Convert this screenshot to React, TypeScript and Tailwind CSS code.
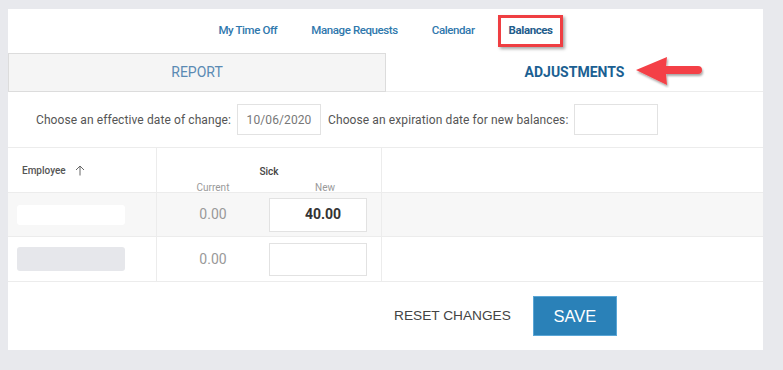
import React from "react";

export default function App() {
  return (
    <div className="w-[783px] h-[370px] bg-[#e8e9ed] pt-[9px] pl-[8px] font-['Roboto',sans-serif]">
      <div className="w-[755px] h-[341px] bg-white flex flex-col">
        {/* top nav */}
        <div className="h-[44px] flex items-center justify-center gap-[34px] text-[11.5px] font-medium tracking-[-0.4px] text-[#2f78ad]">
          <span>My Time Off</span>
          <span>Manage Requests</span>
          <span>Calendar</span>
          <span className="relative font-bold text-[#1f5d8c]">
            Balances
            <span className="absolute left-[-11px] right-[-10px] top-[50%] mt-[-16px] h-[32px] border-[3px] border-[#ef3e42] shadow-[2px_2px_3px_rgba(0,0,0,0.35)]"></span>
          </span>
        </div>
        {/* tabs */}
        <div className="h-[39px] flex">
          <div className="w-[378px] flex items-center justify-center bg-[#f5f5f5] border border-[#dcdcdc] text-[14px] text-[#5a8ab3]">
            REPORT
          </div>
          <div className="flex-1 relative flex items-center justify-center border-b border-[#ececec] text-[14px] font-bold text-[#1b5f92]">
            ADJUSTMENTS
            <svg className="absolute left-[249px] top-[3px]" width="70" height="32" viewBox="0 0 70 32">
              <defs>
                <filter id="sh" x="-20%" y="-20%" width="140%" height="150%">
                  <feDropShadow dx="1" dy="2" stdDeviation="1.2" floodColor="#000" floodOpacity="0.35" />
                </filter>
              </defs>
              <g filter="url(#sh)">
                <path d="M1 14 L32 1 L31 10 L63 10 Q67 10 67 14 Q67 18 63 18 L31 18 L32 29 Z" fill="#f44146" />
              </g>
            </svg>
          </div>
        </div>
        {/* date row */}
        <div className="h-[56px] flex items-center pl-[28px] border-b border-[#ececec] text-[12px] tracking-[0.1px] text-[#555]">
          <span>Choose an effective date of change:</span>
          <div className="ml-[6px] w-[84px] h-[31px] border border-[#e2e2e2] flex items-center justify-center text-[#777]">10/06/2020</div>
          <span className="ml-[7px]">Choose an expiration date for new balances:</span>
          <div className="ml-[6px] w-[84px] h-[31px] border border-[#e2e2e2]"></div>
        </div>
        {/* header row */}
        <div className="h-[45px] flex border-b border-[#ececec]">
          <div className="w-[149px] border-r border-[#ececec] flex items-center pl-[14px] text-[10px] font-medium text-[#555]">
            <span>Employee</span>
            <svg className="ml-[9px]" width="10" height="11" viewBox="0 0 10 11" fill="none" stroke="#666" strokeWidth="1">
              <path d="M5 10.5 V1 M1 5 L5 1 L9 5" />
            </svg>
          </div>
          <div className="w-[225px] border-r border-[#ececec] flex flex-col">
            <div className="pt-[16px] text-center text-[10px] font-medium text-[#444]">Sick</div>
            <div className="flex text-[10px] text-[#999] mt-[1px]">
              <div className="w-[112px] text-center">Current</div>
              <div className="flex-1 text-center">New</div>
            </div>
          </div>
          <div className="flex-1"></div>
        </div>
        {/* row 1 */}
        <div className="h-[44px] flex border-b border-[#ececec] bg-[#f7f7f7]">
          <div className="w-[149px] border-r border-[#ececec] flex items-center pl-[9px]">
            <div className="w-[108px] h-[20px] rounded-[3px] bg-white"></div>
          </div>
          <div className="w-[225px] border-r border-[#ececec] flex items-center">
            <div className="w-[112px] text-center text-[14px] text-[#999]">0.00</div>
            <div className="w-[98px] h-[34px] border border-[#e2e2e2] bg-white flex items-center justify-center pl-[10px] text-[14px] font-bold text-[#333]">40.00</div>
          </div>
          <div className="flex-1"></div>
        </div>
        {/* row 2 */}
        <div className="h-[45px] flex border-b border-[#ececec]">
          <div className="w-[149px] border-r border-[#ececec] flex items-center pl-[9px]">
            <div className="w-[108px] h-[24px] rounded-[3px] bg-[#e6e7eb]"></div>
          </div>
          <div className="w-[225px] border-r border-[#ececec] flex items-center">
            <div className="w-[112px] text-center text-[14px] text-[#999]">0.00</div>
            <div className="w-[98px] h-[33px] border border-[#e2e2e2] bg-white"></div>
          </div>
          <div className="flex-1"></div>
        </div>
        {/* footer */}
        <div className="flex-1 flex items-start pt-[14px] pl-[386px] font-['Liberation_Sans',sans-serif]">
          <div className="h-[40px] flex items-center text-[13.7px] text-[#444]">RESET CHANGES</div>
          <div className="ml-[22px] w-[84px] h-[40px] bg-[#2a81b8] border border-[#5aa6d6] flex items-center justify-center text-[16.5px] text-white">SAVE</div>
        </div>
      </div>
    </div>
  );
}
